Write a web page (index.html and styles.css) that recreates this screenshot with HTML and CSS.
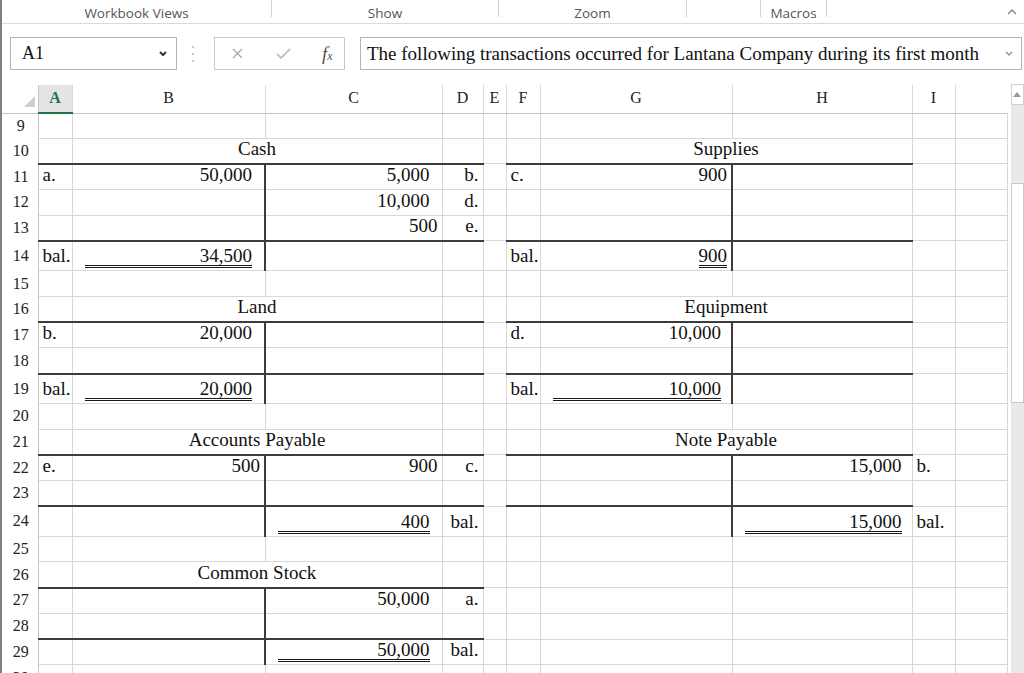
FILE: index.html
```html
<!DOCTYPE html>
<html lang="en">
<head>
    <meta charset="UTF-8">
    <title>Lantana Company - T Accounts</title>
    <link rel="stylesheet" href="styles.css">
</head>
<body>
<div class="app">
    <div class="ribbon">
        <div class="group views">Workbook Views</div>
        <div class="group show">Show</div>
        <div class="group zoom">Zoom</div>
        <div class="group blank"></div>
        <div class="group macros">Macros</div>
        <svg class="collapse" width="10" height="6" viewBox="0 0 10 6"><polyline points="1,5 5,1 9,5" fill="none" stroke="#8a8a8a" stroke-width="1.5"/></svg>
    </div>

    <div class="formula-bar">
        <div class="name-box">
            <span>A1</span>
            <svg width="8" height="5" viewBox="0 0 8 5"><polyline points="1,1 4,4 7,1" fill="none" stroke="#333" stroke-width="2"/></svg>
        </div>
        <svg class="grip" width="4" height="18" viewBox="0 0 4 18"><circle cx="2" cy="2" r="1.1" fill="#bbb"/><circle cx="2" cy="9" r="1.1" fill="#bbb"/><circle cx="2" cy="16" r="1.1" fill="#bbb"/></svg>
        <div class="fx-box">
            <svg class="cancel" width="11" height="11" viewBox="0 0 11 11"><path d="M1 1L10 10M10 1L1 10" stroke="#aaa" stroke-width="1.3"/></svg>
            <svg class="enter" width="15" height="11" viewBox="0 0 15 11"><polyline points="1,6 5,10 14,1" fill="none" stroke="#c2c2c2" stroke-width="1.8"/></svg>
            <span class="fx">f<span>x</span></span>
        </div>
        <div class="formula">
            <span>The following transactions occurred for Lantana Company during its first month</span>
            <svg width="8" height="5" viewBox="0 0 8 5"><polyline points="1,1 4,4 7,1" fill="none" stroke="#999" stroke-width="1.5"/></svg>
        </div>
    </div>

    <div class="sheet">
        <table class="grid">
            <colgroup>
                <col class="c-rh"><col class="c-a"><col class="c-b"><col class="c-c"><col class="c-d"><col class="c-e">
                <col class="c-f"><col class="c-g"><col class="c-h"><col class="c-i"><col class="c-j">
            </colgroup>
            <thead>
                <tr>
                    <th class="corner"><svg width="11" height="11" viewBox="0 0 11 11"><polygon points="11,0 11,11 0,11" fill="#cfcfcf"/></svg></th>
                    <th class="active">A</th><th>B</th><th>C</th><th>D</th><th>E</th>
                    <th>F</th><th>G</th><th>H</th><th>I</th><th class="last"></th>
                </tr>
            </thead>
            <tbody>
                <tr class="first"><th>9</th><td></td><td></td><td></td><td></td><td></td><td></td><td></td><td></td><td></td><td></td></tr>
                <tr><th>10</th><td></td><td colspan="2" class="title">Cash</td><td></td><td></td><td></td><td colspan="2" class="title">Supplies</td><td></td><td></td></tr>
                <tr><th>11</th><td class="t">a.</td><td class="t v acc">50,000</td><td class="t acc">5,000</td><td class="t rl">b.</td><td></td><td class="t">c.</td><td class="t v num">900</td><td class="t"></td><td></td><td></td></tr>
                <tr><th>12</th><td></td><td class="v"></td><td class="acc">10,000</td><td class="rl">d.</td><td></td><td></td><td class="v"></td><td></td><td></td><td></td></tr>
                <tr><th>13</th><td></td><td class="v"></td><td class="num">500</td><td class="rl">e.</td><td></td><td></td><td class="v"></td><td></td><td></td><td></td></tr>
                <tr class="bal"><th>14</th><td class="t">bal.</td><td class="t v acc dbl-cell"><span class="dbl">34,500</span></td><td class="t"></td><td class="t"></td><td></td><td class="t">bal.</td><td class="t v num dbl-cell"><span class="dbl short">900</span></td><td class="t"></td><td></td><td></td></tr>
                <tr><th>15</th><td></td><td></td><td></td><td></td><td></td><td></td><td></td><td></td><td></td><td></td></tr>
                <tr><th>16</th><td></td><td colspan="2" class="title">Land</td><td></td><td></td><td></td><td colspan="2" class="title">Equipment</td><td></td><td></td></tr>
                <tr><th>17</th><td class="t">b.</td><td class="t v acc">20,000</td><td class="t"></td><td class="t"></td><td></td><td class="t">d.</td><td class="t v n10">10,000</td><td class="t"></td><td></td><td></td></tr>
                <tr><th>18</th><td></td><td class="v"></td><td></td><td></td><td></td><td></td><td class="v"></td><td></td><td></td><td></td></tr>
                <tr class="bal"><th>19</th><td class="t">bal.</td><td class="t v acc dbl-cell"><span class="dbl">20,000</span></td><td class="t"></td><td class="t"></td><td></td><td class="t">bal.</td><td class="t v n10 dbl-cell"><span class="dbl">10,000</span></td><td class="t"></td><td></td><td></td></tr>
                <tr><th>20</th><td></td><td></td><td></td><td></td><td></td><td></td><td></td><td></td><td></td><td></td></tr>
                <tr><th>21</th><td></td><td colspan="2" class="title">Accounts Payable</td><td></td><td></td><td></td><td colspan="2" class="title">Note Payable</td><td></td><td></td></tr>
                <tr><th>22</th><td class="t">e.</td><td class="t v num">500</td><td class="t num">900</td><td class="t rl">c.</td><td></td><td class="t"></td><td class="t v"></td><td class="t n10">15,000</td><td>b.</td><td></td></tr>
                <tr><th>23</th><td></td><td class="v"></td><td></td><td></td><td></td><td></td><td class="v"></td><td></td><td></td><td></td></tr>
                <tr class="bal"><th>24</th><td class="t"></td><td class="t v"></td><td class="t acc dbl-cell"><span class="dbl">400</span></td><td class="t rl">bal.</td><td></td><td class="t"></td><td class="t v"></td><td class="t n10 dbl-cell"><span class="dbl">15,000</span></td><td>bal.</td><td></td></tr>
                <tr><th>25</th><td></td><td></td><td></td><td></td><td></td><td></td><td></td><td></td><td></td><td></td></tr>
                <tr><th>26</th><td></td><td colspan="2" class="title">Common Stock</td><td></td><td></td><td></td><td></td><td></td><td></td><td></td></tr>
                <tr><th>27</th><td class="t"></td><td class="t v"></td><td class="t acc">50,000</td><td class="t rl">a.</td><td></td><td></td><td></td><td></td><td></td><td></td></tr>
                <tr><th>28</th><td></td><td class="v"></td><td></td><td></td><td></td><td></td><td></td><td></td><td></td><td></td></tr>
                <tr><th>29</th><td class="t"></td><td class="t v"></td><td class="t acc dbl-cell"><span class="dbl">50,000</span></td><td class="t rl">bal.</td><td></td><td></td><td></td><td></td><td></td><td></td></tr>
                <tr><th>30</th><td></td><td></td><td></td><td></td><td></td><td></td><td></td><td></td><td></td><td></td></tr>
            </tbody>
        </table>

        <div class="vscroll">
            <div class="vs-btn"><svg width="8" height="5" viewBox="0 0 8 5"><polygon points="4,0 8,5 0,5" fill="#9a9a9a"/></svg></div>
            <div class="vs-thumb"></div>
        </div>
    </div>
</div>
</body>
</html>
```

FILE: styles.css
```css
body {
    margin: 0;
    overflow: hidden;
    background: #fff;
    font-family: "Liberation Serif", "Times New Roman", serif;
    color: #111;
}

.app {
    height: 673px;
    border-left: 2px solid #7f7f7f;
    overflow: hidden;
}

/* ribbon group labels */
.ribbon {
    display: flex;
    height: 23px;
    border-bottom: 1px solid #dadada;
    font-family: "Open Sans", "Noto Sans", sans-serif;
    font-size: 13.5px;
    color: #555;
}

.group {
    box-sizing: border-box;
    height: 17px;
    border-right: 1px solid #d4d4d4;
    text-align: center;
    line-height: 26px;
    white-space: nowrap;
}

.views { width: 270px; }
.show { width: 227px; }
.zoom { width: 188px; }
.blank { width: 74px; }
.macros { width: 66px; }

.collapse {
    margin-left: auto;
    margin-right: 7px;
    align-self: center;
}

/* formula bar */
.formula-bar {
    display: flex;
    align-items: center;
    height: 33px;
    padding: 13px 0 15px 8px;
}

.name-box {
    box-sizing: border-box;
    width: 167px;
    height: 33px;
    border: 1px solid #b5b5b5;
    display: flex;
    align-items: center;
    justify-content: space-between;
    padding: 0 9px 0 11px;
    font-size: 18px;
}

.grip {
    margin-left: 14px;
}

.fx-box {
    box-sizing: border-box;
    width: 131px;
    height: 33px;
    margin-left: 19px;
    border: 1px solid #c8c8c8;
    display: flex;
    align-items: center;
}

.cancel { margin-left: 17px; }
.enter { margin-left: 33px; }

.fx {
    margin-left: 31px;
    font-style: italic;
    font-size: 19px;
    color: #555;
}

.fx span {
    font-size: 12px;
}

.formula {
    box-sizing: border-box;
    width: 662px;
    height: 33px;
    margin-left: 15px;
    border: 1px solid #b5b5b5;
    display: flex;
    align-items: center;
    justify-content: space-between;
    padding: 0 8px 0 6px;
    font-size: 19px;
    white-space: nowrap;
}

/* sheet */
.sheet {
    display: flex;
    align-items: flex-start;
}

.grid {
    table-layout: fixed;
    width: 1005px;
    border-collapse: collapse;
}

.c-rh { width: 36px; }
.c-a { width: 34px; }
.c-b { width: 193px; }
.c-c { width: 177px; }
.c-d { width: 41px; }
.c-e { width: 23px; }
.c-f { width: 34px; }
.c-g { width: 192px; }
.c-h { width: 180px; }
.c-i { width: 43px; }
.c-j { width: 52px; }

.grid thead th {
    height: 25px;
    padding: 0 0 2px;
    font-size: 16px;
    font-weight: normal;
    color: #222;
    border-right: 1px solid #d9d9d9;
    border-bottom: 1px solid #c6c6c6;
}

.grid thead th.corner {
    text-align: right;
    vertical-align: bottom;
    padding: 0 3px 2px 0;
    border-right: 1px solid #c6c6c6;
}

.grid thead th.active {
    background: #e4e4e4;
    color: #217346;
    font-weight: bold;
    border-bottom: 2px solid #217346;
}

.grid thead th.last {
    border-right: none;
}

.grid tbody tr {
    height: 25.7px;
}

.grid tbody tr.first {
    height: 25px;
}

.grid tbody tr.bal {
    height: 30px;
}

.grid tbody th {
    padding: 0 0 0 2px;
    font-size: 16px;
    font-weight: normal;
    color: #222;
    vertical-align: middle;
    border: none;
    border-right: 1px solid #c6c6c6;
}

.grid td {
    border: 1px solid #d8d8d8;
    padding: 0 4px 5px;
    vertical-align: bottom;
    font-size: 19px;
    line-height: 19px;
    white-space: nowrap;
}

.grid td.t { border-top: 2px solid #3c3c3c; }
.grid td.v { border-right: 2px solid #3c3c3c; }

.title { text-align: center; }
.rl { text-align: right; }
.num { text-align: right; }
.acc { text-align: right; padding-right: 12px !important; }
.n10 { text-align: right; padding-right: 10px !important; }

.grid td.dbl-cell {
    padding-bottom: 2px;
}

.dbl {
    display: block;
    margin-left: 8px;
    border-bottom: 3px double #1a1a1a;
}

.dbl.short {
    display: inline-block;
}

/* vertical scrollbar */
.vscroll {
    width: 14px;
    height: 600px;
    margin-left: 3px;
    margin-top: -1px;
    background: #e9e9e9;
}

.vs-btn {
    box-sizing: border-box;
    height: 21px;
    background: #fff;
    border: 1px solid #cfcfcf;
    display: flex;
    align-items: center;
    justify-content: center;
}

.vs-thumb {
    box-sizing: border-box;
    height: 220px;
    margin-top: 78px;
    background: #fff;
    border: 1px solid #c9c9c9;
}
```
